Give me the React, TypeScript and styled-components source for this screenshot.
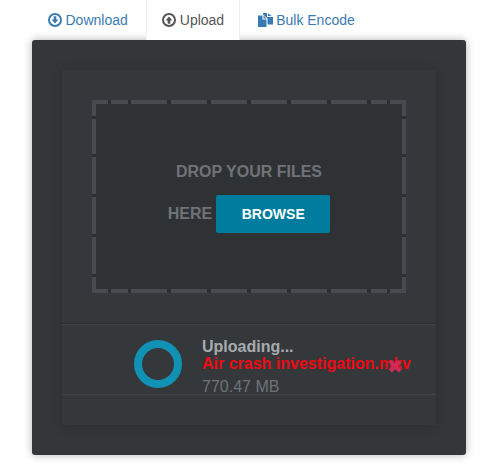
import React from "react";
import styled, { createGlobalStyle } from "styled-components";

const Global = createGlobalStyle`
	html, body {
		margin: 0;
		background: #fff;
		font-family: "Liberation Sans", Arial, sans-serif;
	}
`;

// hard colour stops for one side of the dashed frame
const dashes = (spans: [number, number][]) =>
	spans
		.map(([a, b]) => `#2c2f32 ${a}px, #474b4f ${a}px, #474b4f ${b}px, #2c2f32 ${b}px`)
		.join(", ");

const ACROSS = dashes([
	[0, 16],
	[19, 36],
	[39, 75],
	[79, 115],
	[119, 155],
	[159, 195],
	[199, 235],
	[239, 275],
	[279, 295],
	[298, 314],
]);

const DOWN = dashes([
	[0, 16],
	[19, 54],
	[57, 94],
	[97, 134],
	[137, 174],
	[177, 193],
]);

function CircleArrow({ up }: { up?: boolean }) {
	return (
		<svg viewBox="0 0 14 14" width="14" height="14">
			<circle cx="7" cy="7" r="6" fill="none" stroke="currentColor" strokeWidth="2" />
			<path
				d="M5.7 3.2h2.6v3.4H10.4L7 10.6 3.6 6.6H5.7z"
				fill="currentColor"
				transform={up ? "rotate(180 7 7)" : undefined}
			/>
		</svg>
	);
}

function DocsIcon() {
	return (
		<svg viewBox="0 0 15 14" width="15" height="14">
			<path d="M0 2.5H4.5V6.5H8.5V14H0z" fill="currentColor" />
			<path d="M5.5 2.5 8.5 5.5H5.5z" fill="currentColor" />
			<path d="M5 0H9V4H15V11.5H9.5V5.5L5 1.5z" fill="currentColor" />
			<path d="M10 0.3 13.7 3H10z" fill="currentColor" />
		</svg>
	);
}

function App() {
	return (
		<Page>
			<Global />
			<Tabs>
				<Tab $left={16} $right={18.5}>
					<CircleArrow />
					Download
				</Tab>
				<Tab $active $left={15} $right={14.5}>
					<CircleArrow up />
					Upload
				</Tab>
				<Tab $left={18} $right={16}>
					<DocsIcon />
					Bulk Encode
				</Tab>
			</Tabs>
			<Panel>
				<Inner>
					<DropArea>
						<DropTitle>DROP YOUR FILES</DropTitle>
						<DropRow>
							HERE
							<Browse>BROWSE</Browse>
						</DropRow>
					</DropArea>
					<UploadList>
						<UploadRow>
							<Ring />
							<Info>
								<Status>Uploading...</Status>
								<FileName>
									Air crash investigation.mkv
									<Cancel>✖</Cancel>
								</FileName>
								<Size>770.47 MB</Size>
							</Info>
						</UploadRow>
					</UploadList>
				</Inner>
			</Panel>
		</Page>
	);
}

export default App;

const Page = styled.div`
	width: 487px;
	height: 464px;
	overflow: hidden;
	box-sizing: border-box;
	padding-left: 32px;
`;

const Tabs = styled.ul`
	display: flex;
	height: 40px;
	margin: 0;
	padding: 0;
	list-style: none;
`;

const Tab = styled.li<{ $active?: boolean; $left: number; $right: number }>`
	position: relative;
	z-index: ${(p) => (p.$active ? 1 : 0)};
	display: flex;
	align-items: center;
	gap: 3.5px;
	box-sizing: border-box;
	height: 40px;
	padding: 0 ${(p) => p.$right}px 0 ${(p) => p.$left}px;
	font-size: 14px;
	color: ${(p) => (p.$active ? "#555" : "#3a7ab3")};
	background: ${(p) => (p.$active ? "#fff" : "transparent")};
	border-left: ${(p) => (p.$active ? "1px solid #f0f0f0" : "none")};
	border-right: ${(p) => (p.$active ? "1px solid #f0f0f0" : "none")};
`;

const Panel = styled.div`
	width: 434px;
	height: 415px;
	box-sizing: border-box;
	padding: 30px;
	background: #33373a;
	border-radius: 3px;
	box-shadow: 0 0 9px rgba(0, 0, 0, 0.3);
`;

const Inner = styled.div`
	height: 355px;
	background: #35383b;
	box-shadow: 0 1px 12px rgba(0, 0, 0, 0.18);
	display: flex;
	flex-direction: column;
`;

const DropArea = styled.div`
	box-sizing: border-box;
	width: 314px;
	height: 193px;
	margin: 30px 30px 0;
	padding-top: 63px;
	background-color: #2f3235;
	background-image:
		linear-gradient(to right, ${ACROSS}),
		linear-gradient(to right, ${ACROSS}),
		linear-gradient(to bottom, ${DOWN}),
		linear-gradient(to bottom, ${DOWN});
	background-repeat: no-repeat;
	background-size: 100% 4px, 100% 4px, 4px 100%, 4px 100%;
	background-position: top left, bottom left, top left, top right;
	display: flex;
	flex-direction: column;
	align-items: center;
	color: #6f7377;
	font-size: 16px;
	font-weight: bold;
`;

const DropTitle = styled.div`
	line-height: 18px;
`;

const DropRow = styled.div`
	display: flex;
	align-items: center;
	gap: 4px;
	margin-top: 14px;
`;

const Browse = styled.div`
	width: 114px;
	height: 38px;
	display: flex;
	align-items: center;
	justify-content: center;
	background: #007c9e;
	border-radius: 2px;
	color: #fff;
	font-size: 14px;
`;

const UploadList = styled.div`
	margin-top: 31px;
	height: 69px;
	border-top: 1px solid #3f4246;
	border-bottom: 1px solid #3f4246;
	box-shadow: 0 -1px 0 #2b2d30;
	overflow: hidden;
`;

const UploadRow = styled.div`
	display: flex;
	gap: 20px;
	padding: 15px 0 0 72px;
`;

const Ring = styled.div`
	box-sizing: border-box;
	flex: none;
	width: 48px;
	height: 48px;
	border: 8px solid #1191b3;
	border-radius: 50%;
`;

const Info = styled.div`
	display: flex;
	flex-direction: column;
	margin-top: -1px;
`;

const Status = styled.div`
	font-size: 16px;
	line-height: 16px;
	font-weight: bold;
	color: #a8abae;
`;

const FileName = styled.div`
	position: relative;
	font-size: 16px;
	line-height: 18px;
	font-weight: bold;
	color: #ee0a14;
	white-space: nowrap;
`;

const Cancel = styled.span`
	position: absolute;
	left: 185px;
	top: 1px;
	font-size: 19px;
	line-height: 22px;
	font-weight: normal;
	color: #cf2b58;
`;

const Size = styled.div`
	font-size: 16px;
	line-height: 28px;
	color: #6f7377;
`;
